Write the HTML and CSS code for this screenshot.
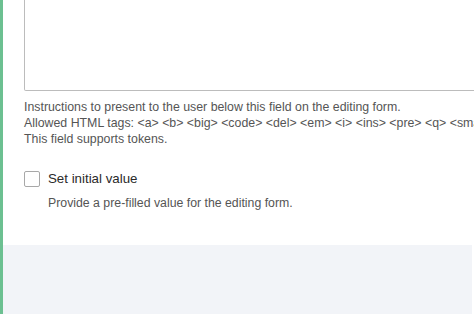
FILE: index.html
```html
<!DOCTYPE html>
<html>
<head>
<meta charset="utf-8">
<link rel="stylesheet" href="styles.css">
</head>
<body>
<div class="page">
  <div class="panel">
    <div class="field">
      <div class="textarea"></div>
      <div class="help">
        <div>Instructions to present to the user below this field on the editing form.</div>
        <div class="nowrap">Allowed HTML tags: &lt;a&gt; &lt;b&gt; &lt;big&gt; &lt;code&gt; &lt;del&gt; &lt;em&gt; &lt;i&gt; &lt;ins&gt; &lt;pre&gt; &lt;q&gt; &lt;small&gt; &lt;span&gt; &lt;strong&gt; &lt;sub&gt; &lt;sup&gt; &lt;tt&gt; &lt;ol&gt; &lt;ul&gt; &lt;li&gt; &lt;p&gt; &lt;br&gt; &lt;img&gt;</div>
        <div>This field supports tokens.</div>
      </div>
    </div>
    <div class="check">
      <span class="box"></span>
      <span class="label">Set initial value</span>
    </div>
    <div class="check-desc">Provide a pre-filled value for the editing form.</div>
  </div>
  <div class="footer"></div>
</div>
</body>
</html>
```
FILE: styles.css
```css
html, body {
  margin: 0;
  padding: 0;
  background: #fff;
  overflow: hidden;
}
body {
  width: 474px;
  height: 318px;
  font-family: "Liberation Sans", Arial, sans-serif;
}
.page {
  border-left: 3px solid #6cc091;
  height: 314px;
  display: flex;
  flex-direction: column;
  overflow: hidden;
}
.panel {
  background: #fff;
  padding: 0 0 0 21px;
  height: 245px;
  flex: none;
  box-sizing: border-box;
}
.textarea {
  height: 100px;
  margin-top: -10px;
  margin-right: -20px;
  border: 1px solid #bcbcbc;
  border-top: none;
  border-radius: 0 0 2px 2px;
}
.help {
  margin-top: 8px;
  font-size: 12.35px;
  line-height: 16px;
  color: #555;
}
.nowrap {
  white-space: nowrap;
}
.check {
  display: flex;
  align-items: center;
  margin-top: 23px;
  gap: 8px;
}
.box {
  width: 14px;
  height: 14px;
  border: 1px solid #a8a8a8;
  border-radius: 2px;
  background: #fff;
}
.label {
  font-size: 13.3px;
  line-height: 18px;
  color: #2a2a2a;
}
.check-desc {
  margin-left: 24px;
  margin-top: 7px;
  font-size: 12.3px;
  line-height: 16px;
  color: #555;
}
.footer {
  background: #f2f4f8;
  flex: 1;
  margin-right: 2px;
}
```
